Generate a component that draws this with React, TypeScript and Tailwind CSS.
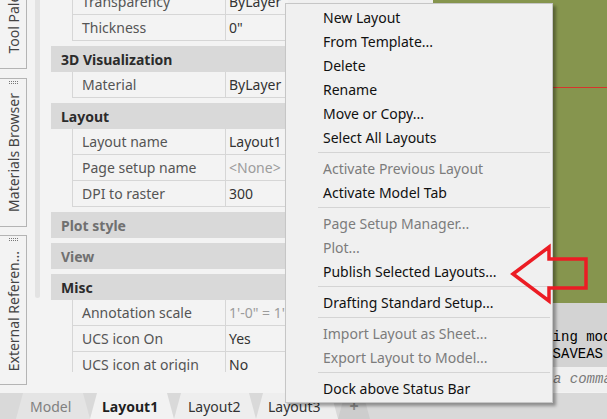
import React from 'react';

type PropItem = { name: string; value: string; muted?: boolean };

const PropRow: React.FC<PropItem> = ({ name, value, muted }) => (
  <div className="flex h-[26px] shrink-0">
    <div className="w-[21px] shrink-0" />
    <div className="w-[153px] shrink-0 border-l border-b border-[#d6d6d6] pl-[9px] flex items-center text-[#555] whitespace-nowrap overflow-hidden">
      {name}
    </div>
    <div
      className={`w-[61px] shrink-0 border-l border-b border-[#d6d6d6] pl-[3px] flex items-center whitespace-nowrap overflow-hidden ${
        muted ? 'text-[#9c9c9c]' : 'text-[#333]'
      }`}
    >
      {value}
    </div>
  </div>
);

const Section: React.FC<{ title: string; dim?: boolean }> = ({ title, dim }) => (
  <div
    className={`mt-[5px] h-[26px] shrink-0 bg-[#d9d9d9] pl-[10px] flex items-center font-bold ${
      dim ? 'text-[#707070]' : 'text-[#2b2b2b]'
    }`}
  >
    {title}
  </div>
);

const Grip = () => (
  <svg width="10" height="4" viewBox="0 0 10 4" className="shrink-0">
    {[0, 2, 4, 6, 8].map((x) => (
      <React.Fragment key={x}>
        <rect x={x} y={0} width="1" height="1" fill="#777" />
        <rect x={x} y={2} width="1" height="1" fill="#777" />
      </React.Fragment>
    ))}
  </svg>
);

const SideTab: React.FC<{ label: string; className: string; grip?: boolean; pb: string }> = ({ label, className, grip, pb }) => (
  <div className={`w-[27px] shrink-0 border-r border-[#b4b4b4] flex flex-col items-center ${className}`}>
    {grip && (
      <div className="pt-[2px] pl-[1px]">
        <Grip />
      </div>
    )}
    <div className={`flex-1 min-h-0 overflow-hidden flex flex-col justify-end items-center ${pb}`}>
      <span className="[writing-mode:vertical-rl] rotate-180 whitespace-nowrap text-[14px] text-[#444]">{label}</span>
    </div>
  </div>
);

type MenuEntry = { label: string; disabled?: boolean } | 'sep';

const menu: MenuEntry[] = [
  { label: 'New Layout' },
  { label: 'From Template...' },
  { label: 'Delete' },
  { label: 'Rename' },
  { label: 'Move or Copy...' },
  { label: 'Select All Layouts' },
  'sep',
  { label: 'Activate Previous Layout', disabled: true },
  { label: 'Activate Model Tab' },
  'sep',
  { label: 'Page Setup Manager...', disabled: true },
  { label: 'Plot...', disabled: true },
  { label: 'Publish Selected Layouts...' },
  'sep',
  { label: 'Drafting Standard Setup...' },
  'sep',
  { label: 'Import Layout as Sheet...', disabled: true },
  { label: 'Export Layout to Model...', disabled: true },
  'sep',
  { label: 'Dock above Status Bar' },
];

const tabShape = '[clip-path:polygon(7px_0,calc(100%_-_7px)_0,100%_100%,0_100%)]';

const App: React.FC = () => {
  return (
    <div className="relative w-[607px] h-[419px] overflow-hidden bg-[#f3f3f3] font-['Noto_Sans',sans-serif] text-[14px]">
      {/* Main area */}
      <div className="flex h-[393px]">
        {/* Vertical palette tabs */}
        <div className="w-[33px] shrink-0 flex flex-col">
          <SideTab label="Tool Palettes" className="h-[69px] border-b" pb="pb-[14px]" />
          <div className="h-[9px] shrink-0" />
          <SideTab label="Materials Browser" className="h-[149px] border-y" grip pb="pb-[14px]" />
          <div className="h-[8px] shrink-0" />
          <SideTab label="External Referen..." className="h-[150px] border-y" grip pb="pb-[13px]" />
        </div>

        {/* Scrollbar */}
        <div className="w-[18px] shrink-0 pl-[2px]">
          <div className="w-[5px] h-[298px] rounded-b-full bg-[#e3e3e3]" />
        </div>

        {/* Properties */}
        <div className="w-[237px] shrink-0 flex flex-col">
          <div className="h-[372px] overflow-hidden">
            <div className="-mt-[11px] flex flex-col">
              <PropRow name="Transparency" value="ByLayer" />
              <PropRow name="Thickness" value={'0"'} />
              <Section title="3D Visualization" />
              <PropRow name="Material" value="ByLayer" />
              <Section title="Layout" />
              <PropRow name="Layout name" value="Layout1" />
              <PropRow name="Page setup name" value="<None>" muted />
              <PropRow name="DPI to raster" value="300" />
              <Section title="Plot style" dim />
              <Section title="View" dim />
              <Section title="Misc" />
              <PropRow name="Annotation scale" value={`1'-0" = 1'-0"`} muted />
              <PropRow name="UCS icon On" value="Yes" />
              <PropRow name="UCS icon at origin" value="No" />
            </div>
          </div>
        </div>

        {/* Drawing + command line */}
        <div className="flex-1 flex flex-col">
          <div className="h-[303px] flex">
            <div className="w-[145px] shrink-0 bg-[#f0f0f0]" />
            <div className="flex-1 bg-[#86954e] pt-[87px]">
              <div className="h-px bg-[#d8342c]" />
            </div>
          </div>
          <div className="h-[64px] bg-[#d3d3d3] pt-[26px] pl-[189px] font-['Liberation_Mono',monospace] text-[14px] leading-[17px] text-black whitespace-nowrap">
            <div>Regenerating model.</div>
            <div>Command: SAVEAS</div>
          </div>
          <div className="h-[25px] bg-[#f0f0f0] pl-[223px] flex items-center font-['Liberation_Mono',monospace] italic text-[#7a7a7a] whitespace-nowrap">
            Type a command
          </div>
        </div>
      </div>

      {/* Layout tabs */}
      <div className="h-[26px] bg-[#d9d9d9] flex pl-[16px]">
        <div className={`w-[74px] bg-[#e4e4e4] pl-[14px] flex items-center text-[#808080] ${tabShape}`}>Model</div>
        <div className={`w-[84px] bg-[#f2f2f2] pl-[12px] flex items-center font-bold text-[#1f1f1f] ${tabShape}`}>Layout1</div>
        <div className={`w-[82px] bg-[#eeeeee] pl-[14px] flex items-center text-[#333] ${tabShape}`}>Layout2</div>
        <div className={`w-[82px] bg-[#eeeeee] pl-[12px] flex items-center text-[#333] ${tabShape}`}>Layout3</div>
        <div className={`w-[32px] bg-[#cdcdcd] flex items-center justify-center text-[#8a8a8a] text-[16px] font-bold ${tabShape}`}>+</div>
      </div>

      {/* Context menu */}
      <div className="absolute left-[285px] top-[3px] w-[268px] bg-[#f0f0f0] border border-[#c6c6c6] shadow-[3px_3px_3px_rgba(0,0,0,0.35)] pt-[1px] pb-[2px]">
        {menu.map((m, i) =>
          m === 'sep' ? (
            <div key={i} className="h-[7px] flex items-center pl-[32px] pr-[2px]">
              <div className="h-px w-full bg-[#d4d4d4]" />
            </div>
          ) : (
            <div
              key={i}
              className={`h-[24px] pl-[37px] flex items-center whitespace-nowrap ${
                m.disabled ? 'text-[#7c7c7c]' : 'text-[#111]'
              }`}
            >
              {m.label}
            </div>
          )
        )}
      </div>

      {/* Red annotation arrow */}
      <svg className="absolute left-[505px] top-[240px]" width="90" height="66" viewBox="0 0 90 66">
        <polygon
          points="8,34 44,7 44,19 81,19 81,48 44,48 44,61"
          fill="none"
          stroke="#ec1c24"
          strokeWidth="3.5"
          strokeLinejoin="miter"
        />
      </svg>
    </div>
  );
};

export default App;
